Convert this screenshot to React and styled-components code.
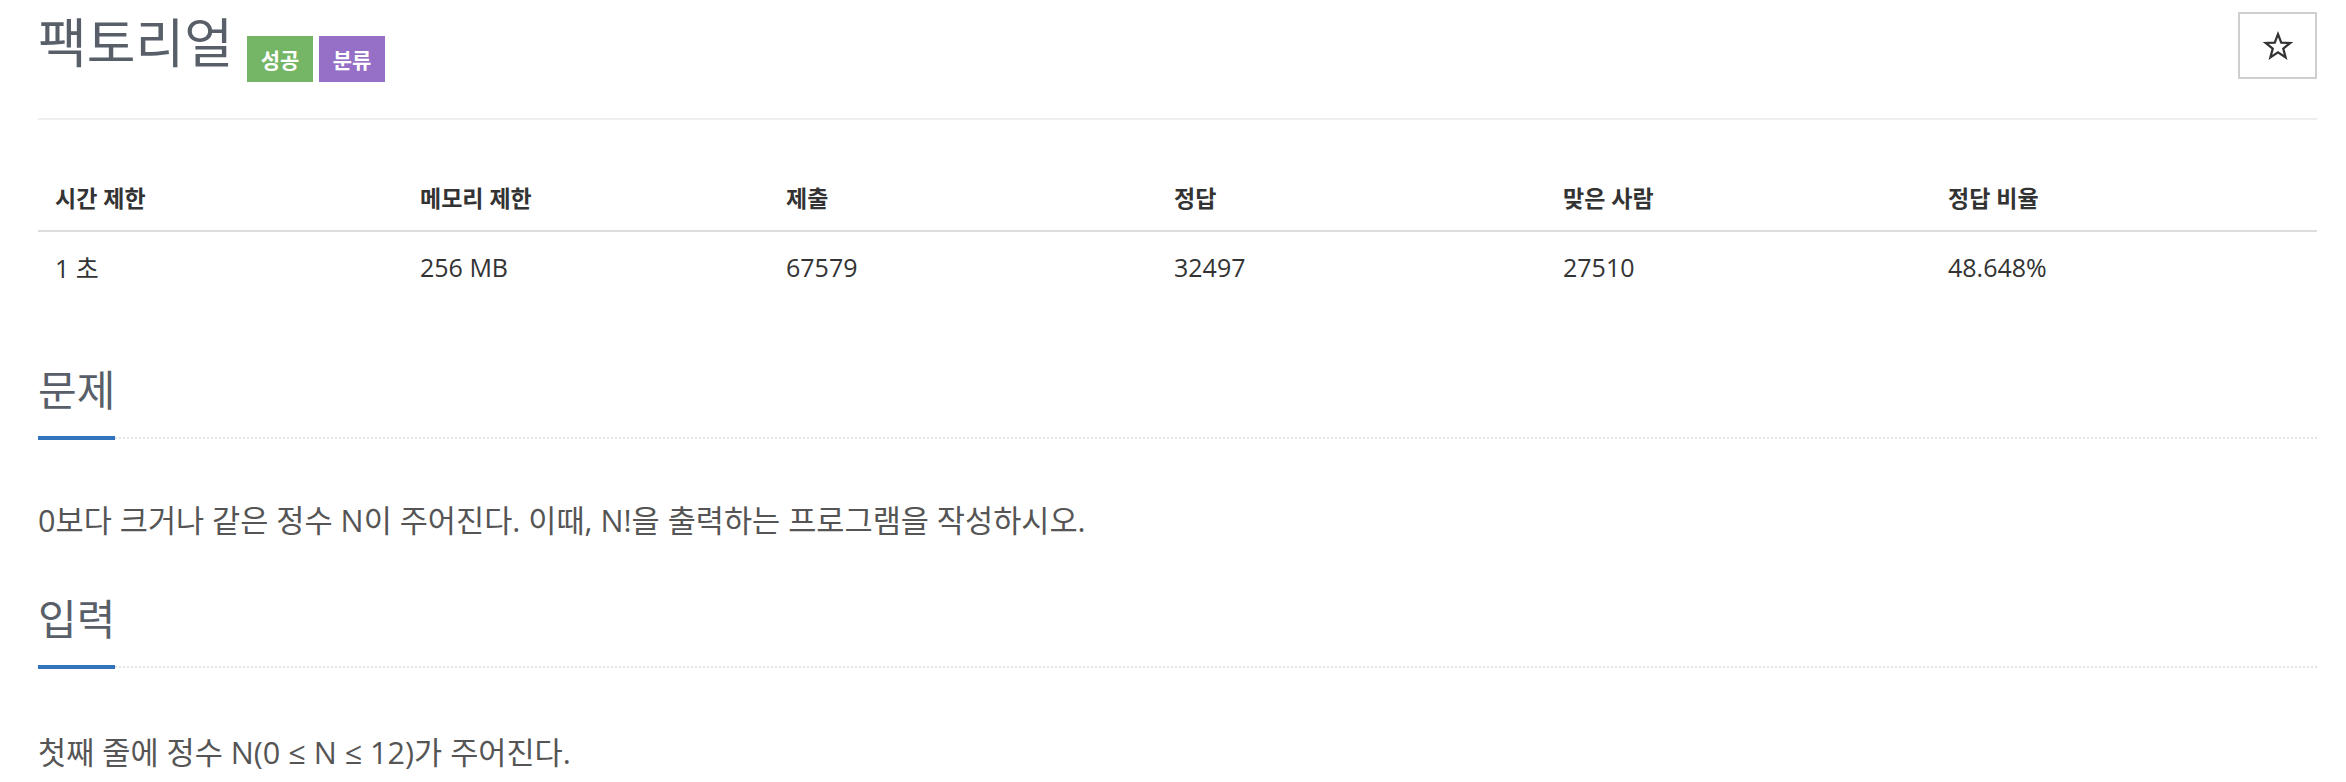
import React from "react";
import styled, { createGlobalStyle } from "styled-components";

const GlobalStyle = createGlobalStyle`
  html, body {
    margin: 0;
    padding: 0;
    background: #fff;
  }
  body {
    font-family: "Open Sans", "Noto Sans CJK KR", sans-serif;
    color: #333;
  }
`;

const Page = styled.div`
  padding: 0 29px 0 38px;
`;

const Header = styled.div`
  display: flex;
  justify-content: space-between;
  align-items: flex-start;
  height: 120px;
  box-sizing: border-box;
  border-bottom: 2px solid #eee;
`;

const TitleRow = styled.div`
  display: flex;
  align-items: flex-start;
`;

const Title = styled.h1`
  margin: 15px 0 0;
  font-size: 53px;
  line-height: 56px;
  font-weight: 400;
  color: #585f69;
`;

const Labels = styled.div`
  display: flex;
  gap: 6px;
  margin: 36px 0 0 14px;
`;

const Label = styled.span`
  display: inline-flex;
  align-items: center;
  justify-content: center;
  width: 66px;
  height: 46px;
  font-size: 21px;
  font-weight: 700;
  color: #fff;
  background: ${({ $tone }) => ($tone === "success" ? "#74b566" : "#9570c6")};
`;

const StarButton = styled.button`
  display: flex;
  align-items: center;
  justify-content: center;
  width: 79px;
  height: 67px;
  margin-top: 12px;
  padding: 0;
  background: #fff;
  border: 2px solid #cfcfcf;
  cursor: pointer;
`;

const Table = styled.div`
  margin-top: 44px;
`;

const Row = styled.div`
  display: grid;
  grid-template-columns: 365px 366px 388px 389px 385px 1fr;
  align-items: center;
  height: ${({ $head }) => ($head ? "66px" : "70px")};
  border-bottom: ${({ $head }) => ($head ? "2px solid #ddd" : "none")};
  font-size: ${({ $head }) => ($head ? "23px" : "25px")};
  font-weight: ${({ $head }) => ($head ? 700 : 400)};
  color: #333;
`;

const Cell = styled.div`
  padding: 0 17px;
`;

const Section = styled.section`
  margin-top: ${({ $first }) => ($first ? "65px" : "53px")};
`;

const Headline = styled.div`
  display: flex;
  border-bottom: 2px dotted #e3e4ea;
`;

const SectionTitle = styled.h2`
  margin: 0 0 -3px;
  padding-bottom: 23px;
  font-size: 42px;
  line-height: 46px;
  font-weight: 400;
  color: #585f69;
  border-bottom: 4px solid #3173bd;
`;

const Text = styled.p`
  margin: ${({ $gap }) => $gap || "58px"} 0 0;
  font-size: 30.6px;
  line-height: 46px;
  color: #555;
`;

const StarIcon = () => (
  <svg width="30" height="30" viewBox="0 0 24 24">
    <polygon
      points="12,2.5 14.6,9.3 21.8,9.6 16.2,14.1 18.1,21.1 12,17.1 5.9,21.1 7.8,14.1 2.2,9.6 9.4,9.3"
      fill="none"
      stroke="#333"
      strokeWidth="1.8"
      strokeLinejoin="miter"
    />
  </svg>
);

const info = [
  ["시간 제한", "1 초"],
  ["메모리 제한", "256 MB"],
  ["제출", "67579"],
  ["정답", "32497"],
  ["맞은 사람", "27510"],
  ["정답 비율", "48.648%"],
];

export default function App() {
  return (
    <Page>
      <GlobalStyle />
      <Header>
        <TitleRow>
          <Title>팩토리얼</Title>
          <Labels>
            <Label $tone="success">성공</Label>
            <Label $tone="tag">분류</Label>
          </Labels>
        </TitleRow>
        <StarButton aria-label="즐겨찾기">
          <StarIcon />
        </StarButton>
      </Header>

      <Table>
        <Row $head>
          {info.map(([head]) => (
            <Cell key={head}>{head}</Cell>
          ))}
        </Row>
        <Row>
          {info.map(([head, value]) => (
            <Cell key={head}>{value}</Cell>
          ))}
        </Row>
      </Table>

      <Section $first>
        <Headline>
          <SectionTitle>문제</SectionTitle>
        </Headline>
        <Text>0보다 크거나 같은 정수 N이 주어진다. 이때, N!을 출력하는 프로그램을 작성하시오.</Text>
      </Section>

      <Section>
        <Headline>
          <SectionTitle>입력</SectionTitle>
        </Headline>
        <Text $gap="61px">첫째 줄에 정수 N(0 ≤ N ≤ 12)가 주어진다.</Text>
      </Section>
    </Page>
  );
}
